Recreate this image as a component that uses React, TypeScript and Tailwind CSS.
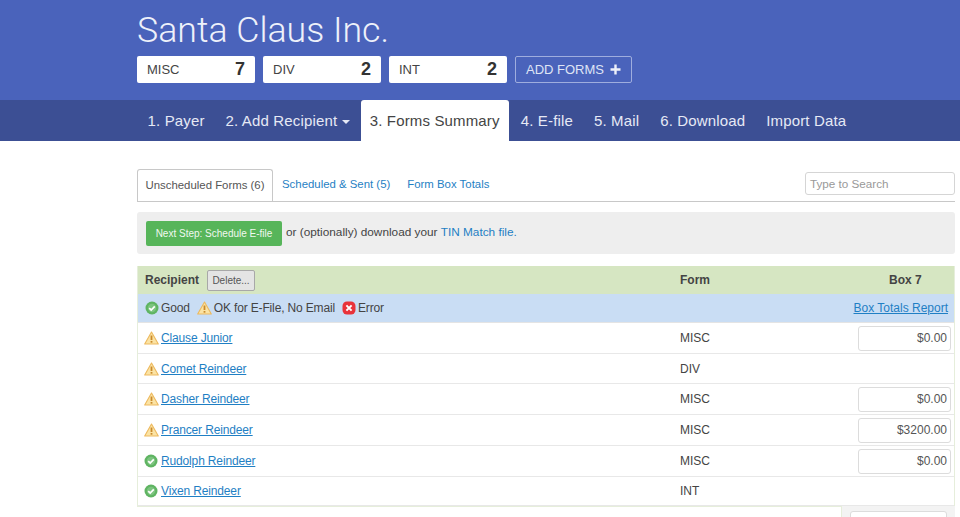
import React from 'react';

const font = 'font-["Liberation_Sans",Arial,sans-serif]';

function GoodIcon() {
  return (
    <svg width="14" height="14" viewBox="0 0 14 14" className="shrink-0">
      <circle cx="7" cy="7" r="6.5" fill="#5fb462" />
      <circle cx="7" cy="7" r="4.2" fill="#7cc47f" />
      <path d="M4.2 7.2 L6.2 9 L9.8 5.4" fill="none" stroke="#fff" strokeWidth="1.7" />
    </svg>
  );
}

function WarnIcon() {
  return (
    <svg width="15" height="14" viewBox="0 0 15 14" className="shrink-0">
      <path d="M7.5 1 L14.3 13 L0.7 13 Z" fill="#fbe3a4" stroke="#edb95e" strokeWidth="1.1" strokeLinejoin="round" />
      <path d="M7.5 4.5 L7.5 9" stroke="#c98a2b" strokeWidth="1.8" />
      <rect x="6.6" y="10" width="1.8" height="1.7" fill="#c98a2b" />
    </svg>
  );
}

function ErrorIcon() {
  return (
    <svg width="14" height="14" viewBox="0 0 14 14" className="shrink-0">
      <rect x="0.5" y="0.5" width="13" height="13" rx="4.5" fill="#e9333a" />
      <path d="M4.4 4.4 L9.6 9.6 M9.6 4.4 L4.4 9.6" stroke="#fff" strokeWidth="2" />
    </svg>
  );
}

function Counter({ label, count }: { label: string; count: number }) {
  return (
    <div className="flex h-[27px] w-[118px] items-center justify-between rounded-[2px] bg-white px-[10px]">
      <span className="text-[13px] text-[#444]">{label}</span>
      <span className="text-[18px] font-bold text-[#333]">{count}</span>
    </div>
  );
}

const navItems = ['1. Payer', '2. Add Recipient', '3. Forms Summary', '4. E-file', '5. Mail', '6. Download', 'Import Data'];

const rows = [
  { name: 'Clause Junior', form: 'MISC', box: '$0.00', ok: false, h: 'h-[31px]' },
  { name: 'Comet Reindeer', form: 'DIV', box: '', ok: false, h: 'h-[30px]' },
  { name: 'Dasher Reindeer', form: 'MISC', box: '$0.00', ok: false, h: 'h-[31px]' },
  { name: 'Prancer Reindeer', form: 'MISC', box: '$3200.00', ok: false, h: 'h-[31px]' },
  { name: 'Rudolph Reindeer', form: 'MISC', box: '$0.00', ok: true, h: 'h-[31px]' },
  { name: 'Vixen Reindeer', form: 'INT', box: '', ok: true, h: 'h-[29px]' },
];

export default function App() {
  return (
    <div className={`h-[517px] w-[960px] overflow-hidden bg-white ${font}`}>
      {/* Header */}
      <div className="h-[100px] bg-[#4a63bb] pl-[137px] pt-[10px]">
        <h1 className='font-["Roboto",sans-serif] text-[35.7px] font-light leading-[41px] text-[#eef1fa]'>Santa Claus Inc.</h1>
        <div className="mt-[5px] flex gap-[8px]">
          <Counter label="MISC" count={7} />
          <Counter label="DIV" count={2} />
          <Counter label="INT" count={2} />
          <div className="flex h-[27px] w-[117px] items-center justify-center gap-[6px] rounded-[2px] border border-[#9fadde] text-[13px] text-[#dfe4f5]">
            ADD FORMS
            <svg width="11" height="11" viewBox="0 0 11 11">
              <path d="M5.5 0.5 V10.5 M0.5 5.5 H10.5" stroke="#eef1fa" strokeWidth="2.4" />
            </svg>
          </div>
        </div>
      </div>

      {/* Steps nav */}
      <nav className="flex h-[41px] items-end bg-[#3c4f94] pl-[137px]">
        {navItems.map((item) => {
          const active = item.startsWith('3.');
          return (
            <div
              key={item}
              className={`flex h-[41px] items-center pt-[2px] text-[15px] tracking-[0.15px] ${
                active
                  ? 'mr-[1.5px] w-[148px] justify-center rounded-t-[3px] bg-white text-[#444]'
                  : 'px-[10.5px] text-[#e6e9f5]'
              }`}
            >
              {item}
              {item.startsWith('2.') && (
                <span className="ml-[5px] mt-[1px] h-0 w-0 border-x-[4px] border-t-[4px] border-x-transparent border-t-[#e6e9f5]" />
              )}
            </div>
          );
        })}
      </nav>

      <div className="ml-[137px] w-[818px]">
        {/* Tabs */}
        <div className="mt-[29px] flex h-[32px] items-end justify-between border-b border-[#c8c8c8]">
          <div className="flex h-[32px] text-[11.4px]">
            <div className="mb-[-1px] flex h-[32px] w-[136px] items-center justify-center rounded-t-[3px] border border-b-0 border-[#c8c8c8] bg-white text-[#555]">
              Unscheduled Forms (6)
            </div>
            <div className="flex items-center pl-[9px] text-[#1f7fc4]">Scheduled &amp; Sent (5)</div>
            <div className="flex items-center pl-[17px] text-[#1f7fc4]">Form Box Totals</div>
          </div>
          <div className="mb-[6px] flex h-[23px] w-[150px] items-center rounded-[3px] border border-[#d5d5d5] pl-[4px] text-[11.7px] text-[#999]">
            Type to Search
          </div>
        </div>

        {/* Next step */}
        <div className="mt-[10px] flex h-[42px] items-center rounded-[3px] bg-[#eeeeee] pl-[9px] text-[11.8px] text-[#444]">
          <div className="flex h-[25px] w-[136px] items-center justify-center rounded-[2px] bg-[#57b55a] text-[10px] text-[#f0f8f0]">
            Next Step: Schedule E-file
          </div>
          <span className="ml-[4px]">or (optionally) download your&nbsp;</span>
          <span className="text-[#1f7fc4]">TIN Match file.</span>
        </div>

        {/* Table */}
        <div className="mt-[12px] border-x border-[#e6eedb]">
          <div className="flex h-[28px] items-center bg-[#d6e6c2] text-[12px] font-bold text-[#444]">
            <span className="ml-[7px]">Recipient</span>
            <div className="ml-[8px] flex h-[21px] w-[48px] items-center justify-center rounded-[2px] border border-[#a8a8a8] bg-[#e4e4e4] text-[10px] font-normal text-[#555]">
              Delete...
            </div>
            <span className="ml-[425px] w-[209px]">Form</span>
            <span className="w-[40px]">Box 7</span>
          </div>
          <div className="flex h-[29px] items-center gap-[2px] border-b border-[#e4e4e4] bg-[#c9ddf4] pl-[7px] text-[12px] tracking-[-0.15px] text-[#444]">
            <GoodIcon />
            <span>Good</span>
            <span className="ml-[5px]"><WarnIcon /></span>
            <span>OK for E-File, No Email</span>
            <span className="ml-[5px]"><ErrorIcon /></span>
            <span>Error</span>
            <span className="ml-auto mr-[6px] tracking-normal text-[#1f7fc4] underline">Box Totals Report</span>
          </div>
          {rows.map((row) => (
            <div key={row.name} className={`flex items-center border-b border-[#e8e8e8] text-[12px] ${row.h}`}>
              <span className="ml-[6px] flex w-[17px] shrink-0">{row.ok ? <GoodIcon /> : <WarnIcon />}</span>
              <span className="w-[519px] tracking-[-0.15px] text-[#1f7fc4] underline">{row.name}</span>
              <span className="w-[178px] text-[#444]">{row.form}</span>
              {row.box && (
                <div className="flex h-[25px] w-[93px] items-center justify-end rounded-[3px] border border-[#dcdcdc] pr-[3px] text-[#555]">
                  {row.box}
                </div>
              )}
            </div>
          ))}
        </div>

        {/* Totals row, cut off by the window */}
        <div className="flex h-[11px]">
          <div className="w-[705px] border-r border-t border-[#e6eedb]" />
          <div className="flex flex-1 justify-center bg-[#f3f3f3] pt-[5px]">
            <div className="h-[10px] w-[97px] rounded-t-[3px] border border-[#dcdcdc] bg-white" />
          </div>
        </div>
      </div>
    </div>
  );
}
